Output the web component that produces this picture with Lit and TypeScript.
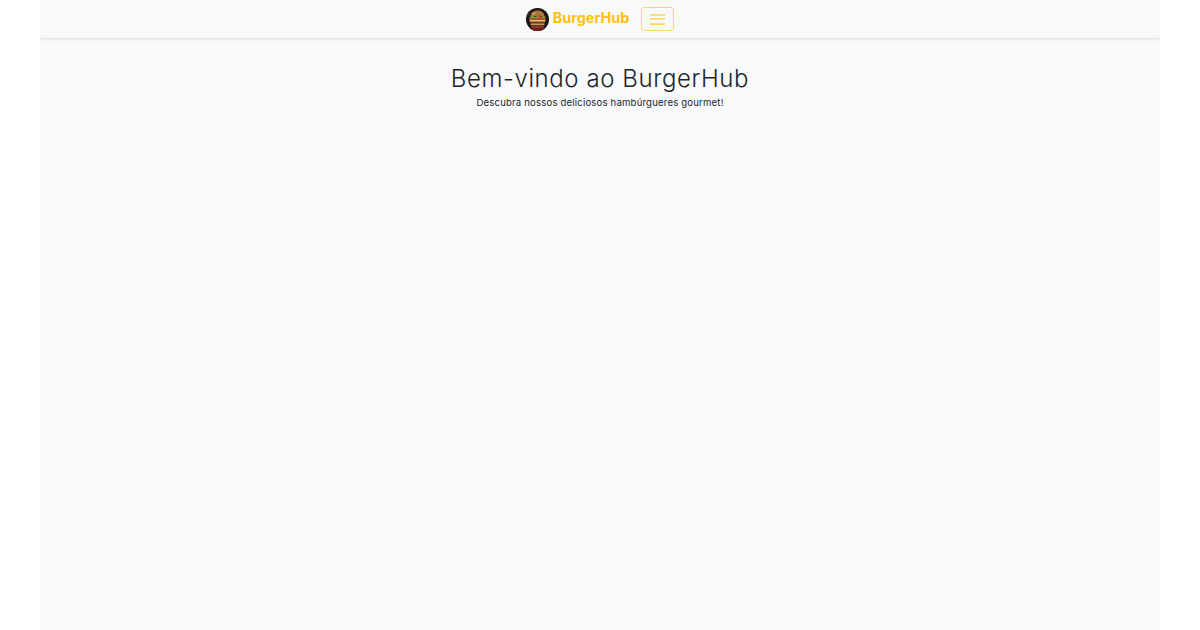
import { LitElement, html, css } from "lit";
import { customElement } from "lit/decorators.js";

@customElement("app-root")
export class AppRoot extends LitElement {
  static styles = css`
    :host {
      display: block;
      background: #fff;
      font-family: "Inter", "Liberation Sans", sans-serif;
      color: #212529;
    }
    .page {
      margin: 0 40px;
      height: 630px;
      background: #f8f9fa;
      overflow: hidden;
    }
    .nav {
      height: 38px;
      display: flex;
      justify-content: center;
      align-items: center;
      gap: 12px;
      background: #f8f9fa;
      box-shadow: 0 1px 3px rgba(0, 0, 0, 0.12);
    }
    .brand {
      display: flex;
      align-items: center;
      gap: 4px;
      color: #ffc107;
      font-weight: 700;
      font-size: 14.4px;
    }
    .brand span {
      position: relative;
      top: -1.5px;
    }
    .logo {
      width: 23px;
      height: 23px;
      display: block;
    }
    .toggler {
      box-sizing: border-box;
      width: 33px;
      height: 24px;
      border: 1px solid rgba(255, 193, 7, 0.6);
      border-radius: 3px;
      display: flex;
      align-items: center;
      justify-content: center;
    }
    .toggler svg {
      display: block;
    }
    .hero {
      text-align: center;
      padding-top: 24px;
    }
    h1 {
      margin: 0;
      font-size: 24px;
      line-height: 33px;
      font-weight: 350;
      letter-spacing: 0.58px;
    }
    p {
      margin: 0;
      font-size: 9.6px;
      line-height: 15px;
      letter-spacing: 0.17px;
    }
  `;

  render() {
    return html`
      <div class="page">
        <nav class="nav">
          <div class="brand">
            <svg class="logo" viewBox="0 0 23 23" aria-hidden="true">
              <defs>
                <clipPath id="logo-clip"><circle cx="11.5" cy="11.5" r="11.5" /></clipPath>
              </defs>
              <g clip-path="url(#logo-clip)">
                <rect width="23" height="23" fill="#1d1412" />
                <path d="M0 0H6L3 8H0Z" fill="#3a2a22" />
                <path d="M4.5 8C5 4 8 2.4 11.5 2.4S18 4 18.5 8Z" fill="#a9763c" />
                <path d="M6.5 5.5L9 4.5L9.5 6L7 6.5Z" fill="#d8b27c" />
                <path d="M3.5 9L6.5 7.6L9 9L12 7.6L15 9L17.5 7.6L19.5 9V10.4H3.5Z" fill="#7f9d3c" />
                <rect x="12" y="7.6" width="3" height="2.6" fill="#d0452f" />
                <rect x="3" y="10.2" width="17" height="2" rx="1" fill="#b9502f" />
                <rect x="3.5" y="12.1" width="16" height="1.7" rx="0.8" fill="#e5bd6c" />
                <rect x="4" y="13.7" width="15" height="2" rx="1" fill="#6e3e22" />
                <rect x="4.5" y="15.6" width="14" height="1.6" rx="0.8" fill="#c69a58" />
                <rect x="0" y="20" width="23" height="3" fill="#6d221f" />
                <ellipse cx="11.5" cy="18.8" rx="7" ry="1" fill="#a33a30" />
              </g>
            </svg>
            <span>BurgerHub</span>
          </div>
          <div class="toggler">
            <svg width="15" height="11" viewBox="0 0 15 11" aria-hidden="true">
              <path d="M0 1H15M0 5H15M0 10H15" stroke="#ffc107" stroke-width="1" fill="none" />
              <path d="M0 10.9H15" stroke="#ffc107" stroke-opacity="0.5" stroke-width="0.6" fill="none" />
            </svg>
          </div>
        </nav>
        <section class="hero">
          <h1>Bem-vindo ao BurgerHub</h1>
          <p>Descubra nossos deliciosos hambúrgueres gourmet!</p>
        </section>
      </div>
    `;
  }
}
